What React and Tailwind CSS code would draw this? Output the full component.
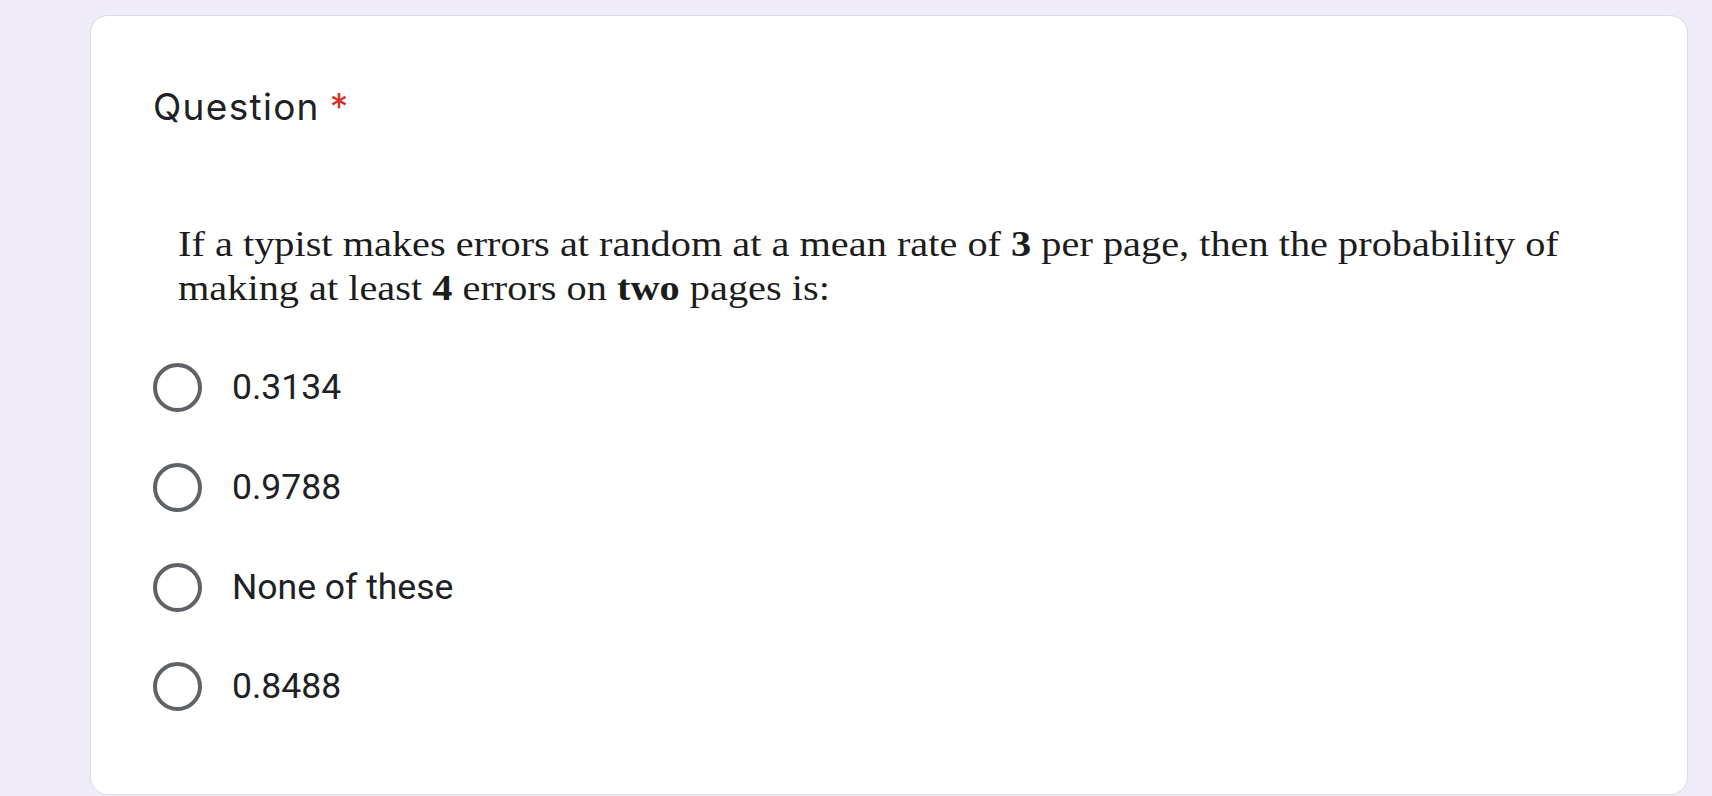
import React from 'react';

const options = ['0.3134', '0.9788', 'None of these', '0.8488'];

export default function App() {
  return (
    <div className="w-[1712px] h-[796px] overflow-hidden bg-[#efebf8] pt-[15px] pl-[90px]">
      <div className="w-[1598px] h-[780px] bg-white border border-[#dadce0] rounded-[18px] pl-[62px] pt-[69px]">
        {/* question title */}
        <div className="flex items-center text-[37px] leading-[44px] text-[#202124] font-['Inter',sans-serif]">
          <span className="tracking-[1.3px]">Question</span>
          <span className="ml-[10px] text-[#d93025]">*</span>
        </div>

        {/* question image text */}
        <p className="mt-[94px] ml-[25px] origin-left scale-x-[1.136] whitespace-nowrap text-[35.5px] leading-[43.5px] text-[#1c1c1c] font-['Liberation_Serif',serif]">
          If a typist makes errors at random at a mean rate of <b>3</b> per page, then the probability of
          <br />
          making at least <b>4</b> errors on <b>two</b> pages is:
        </p>

        {/* choices */}
        <div className="mt-[28px] flex flex-col">
          {options.map((opt) => (
            <label key={opt} className="h-[99.7px] flex items-center gap-[30px]">
              <span className="w-[49px] h-[49px] rounded-full border-[4px] border-[#5f6368] shrink-0" />
              <span className="text-[35.5px] text-[#202124] font-['Roboto',sans-serif]">{opt}</span>
            </label>
          ))}
        </div>
      </div>
    </div>
  );
}
